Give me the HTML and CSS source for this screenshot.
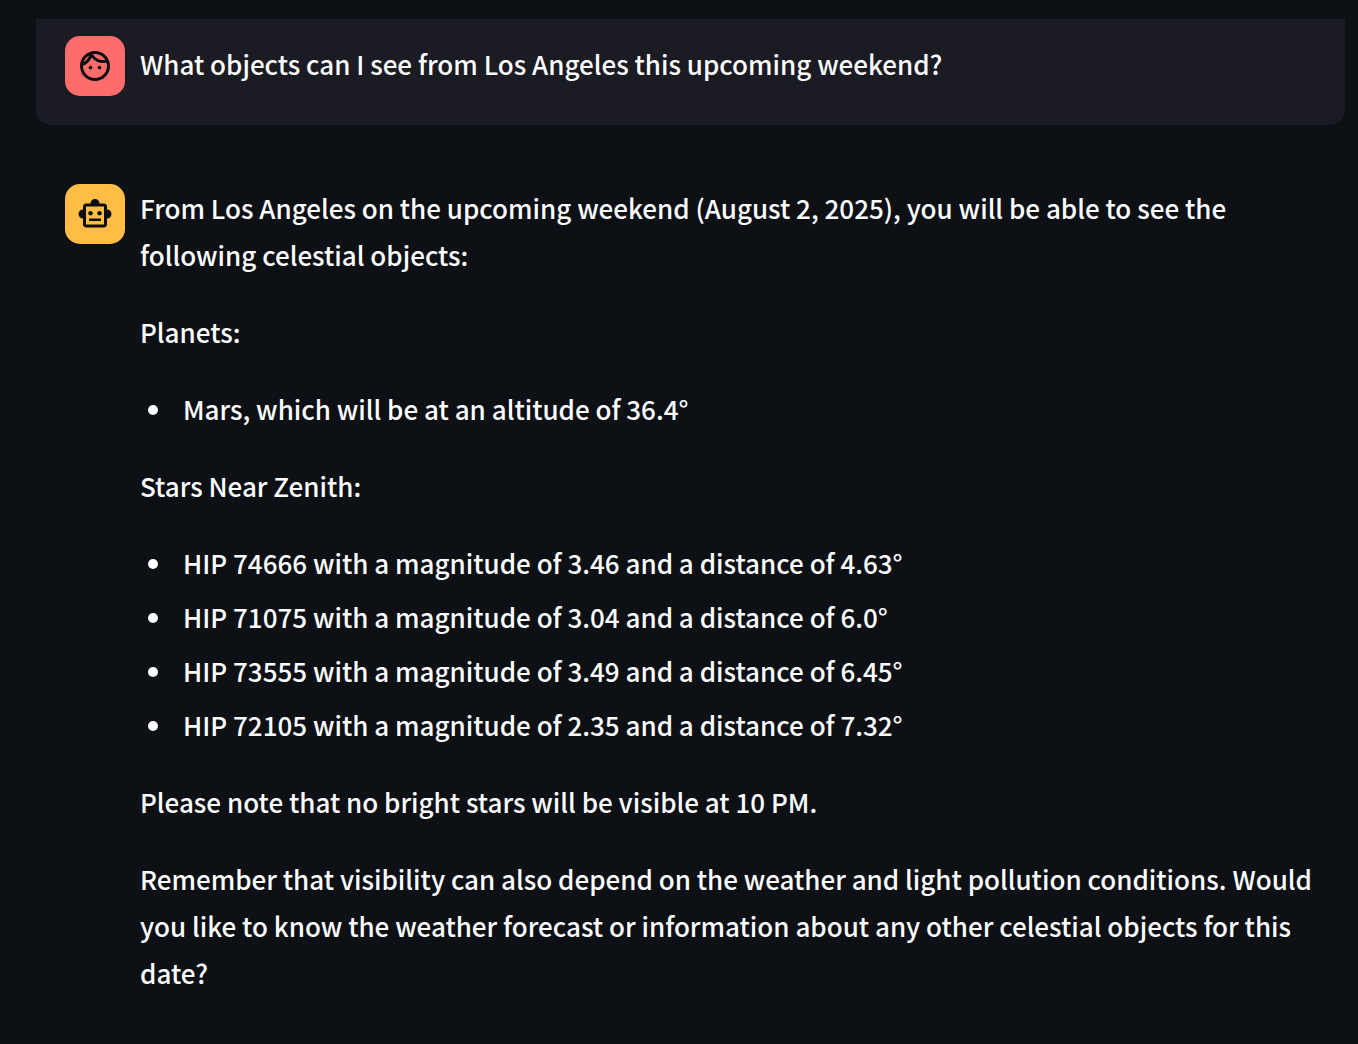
FILE: index.html
```html
<!DOCTYPE html>
<html lang="en">
<head>
<meta charset="utf-8">
<meta name="viewport" content="width=device-width, initial-scale=1">
<title>Stargazing chat</title>
<link rel="stylesheet" href="styles.css">
</head>
<body>
<main class="chat">
  <article class="message message-user">
    <div class="avatar avatar-user">
      <svg viewBox="0 0 24 24" aria-hidden="true"><path d="M10.25 13c0 .69-.56 1.25-1.25 1.25S7.75 13.69 7.75 13s.56-1.25 1.25-1.25 1.250.56 1.250 1.250zM15 11.750c-.69 0-1.250.56-1.250 1.250s.56 1.250 1.250 1.250 1.250-.56 1.250-1.250-.56-1.250-1.250-1.250zm7 .250c0 5.520-4.480 10-10 10S2 17.520 2 12 6.480 2 12 2s10 4.480 10 10zM10.660 4.120C12.060 6.440 14.600 8 17.500 8c.46 0 .91-.05 1.340-.12C17.440 5.560 14.900 4 12 4c-.46 0-.91.05-1.340.12zM4.420 9.470c1.710-.97 3.030-2.550 3.660-4.440C6.370 6 5.050 7.580 4.420 9.470zM20 12c0-.78-.12-1.530-.33-2.240-.7.150-1.420.240-2.170.240-3.130 0-5.920-1.440-7.760-3.690C8.690 8.870 6.600 10.880 4 11.860c.01.04 0 .09 0 .14 0 4.420 3.580 8 8 8s8-3.580 8-8z"/></svg>
    </div>
    <div class="content"><p>What objects can I see from Los Angeles this upcoming weekend?</p></div>
  </article>
  <article class="message">
    <div class="avatar avatar-bot">
      <svg viewBox="0 0 24 24" aria-hidden="true"><path d="M20 9V7c0-1.100-.9-2-2-2h-3c0-1.660-1.340-3-3-3S9 3.340 9 5H6c-1.100 0-2 .9-2 2v2c-1.660 0-3 1.340-3 3s1.340 3 3 3v4c0 1.100.9 2 2 2h12c1.100 0 2-.9 2-2v-4c1.660 0 3-1.340 3-3s-1.340-3-3-3zm-2 10H6V7h12v12zm-9-6c-.83 0-1.500-.67-1.500-1.500S8.170 10 9 10s1.500.67 1.500 1.500S9.830 13 9 13zm7.500-1.500c0 .83-.67 1.500-1.500 1.500s-1.500-.67-1.500-1.500.67-1.500 1.500-1.500 1.500.67 1.500 1.500zM8 15h8v1.700H8v-1.700z"/></svg>
    </div>
    <div class="content">
      <p>From Los Angeles on the upcoming weekend (August 2, 2025), you will be able to see the following celestial objects:</p>
      <p>Planets:</p>
      <ul><li>Mars, which will be at an altitude of 36.4°</li></ul>
      <p>Stars Near Zenith:</p>
      <ul>
        <li>HIP 74666 with a magnitude of 3.46 and a distance of 4.63°</li>
        <li>HIP 71075 with a magnitude of 3.04 and a distance of 6.0°</li>
        <li>HIP 73555 with a magnitude of 3.49 and a distance of 6.45°</li>
        <li>HIP 72105 with a magnitude of 2.35 and a distance of 7.32°</li>
      </ul>
      <p>Please note that no bright stars will be visible at 10 PM.</p>
      <p>Remember that visibility can also depend on the weather and light pollution conditions. Would you like to know the weather forecast or information about any other celestial objects for this date?</p>
    </div>
  </article>
</main>
</body>
</html>
```
FILE: styles.css
```css
* { box-sizing: border-box; }
body {
  margin: 0;
  background: #0d1116;
  color: #fcfcfc;
  font-family: "Source Sans Pro", "Noto Sans CJK SC", sans-serif;
  font-size: 26px;
  font-weight: 500;
  line-height: 47px;
}
.chat {
  display: flex;
  flex-direction: column;
  gap: 30px;
  padding: 19px 13px 0 36px;
}
.message {
  display: flex;
  align-items: flex-start;
  gap: 15px;
  padding: 29px;
}
.message-user {
  padding-top: 17px;
  border-radius: 0 0 15px 15px;
  background: #1b1b24;
}
.message-user .content { padding-top: 4px; }
.avatar {
  display: flex;
  flex: none;
  align-items: center;
  justify-content: center;
  width: 60px;
  height: 60px;
  border-radius: 15px;
  color: #0c0d10;
}
.avatar-user { background: #ff6c6c; }
.avatar-bot { background: #ffbd45; }
.avatar svg {
  width: 36px;
  height: 36px;
  fill: currentColor;
}
.content {
  flex: 1;
  min-width: 0;
}
p { margin: 0 0 30px; }
p:last-child { margin-bottom: 0; }
ul {
  margin: 0 0 30px;
  padding-left: 35px;
}
li { padding-left: 8px; }
li + li { margin-top: 7px; }
```
